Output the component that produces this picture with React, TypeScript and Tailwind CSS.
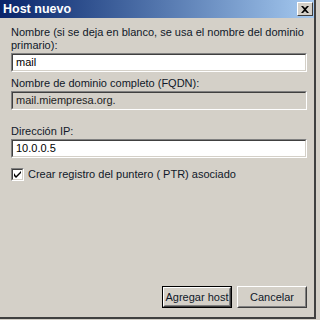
import React from 'react'

const font = { fontFamily: '"Liberation Sans", "DejaVu Sans", sans-serif' }

function Sunken({ value, readOnly }: { value: string; readOnly?: boolean }) {
  return (
    <div className="border border-t-[#808080] border-l-[#808080] border-r-white border-b-white">
      <div
        className={`h-[17px] border border-t-[#404040] border-l-[#404040] border-r-[#d4d0c8] border-b-[#d4d0c8] flex items-center pl-[3px] text-[11px] leading-none ${
          readOnly ? 'bg-[#d4d0c8] text-[#222]' : 'bg-white text-black'
        }`}
      >
        {value}
      </div>
    </div>
  )
}

function Button({ label, isDefault }: { label: string; isDefault?: boolean }) {
  const inner = (
    <div className="h-full border border-t-white border-l-white border-r-[#404040] border-b-[#404040]">
      <div className="h-full border border-t-[#d4d0c8] border-l-[#d4d0c8] border-r-[#808080] border-b-[#808080] flex items-center justify-center text-[11px] text-[#101828]">
        {label}
      </div>
    </div>
  )
  return (
    <div className={`w-[70px] h-[22px] ${isDefault ? 'border border-black' : ''}`}>
      {inner}
    </div>
  )
}

export default function App() {
  return (
    <div className="w-[320px] h-[320px] bg-[#d4d0c8] overflow-hidden" style={font}>
      <div className="w-[316px] h-[319px] flex flex-col bg-[#d4d0c8] border-r-2 border-b-2 border-r-[#404040] border-b-[#404040]">
        <div className="h-[18px] flex items-center justify-between pl-[3px] pr-[1px] bg-gradient-to-r from-[#0a246a] to-[#a6caf0]">
          <span className="text-white font-bold text-[12.5px]">Host nuevo</span>
          <div className="w-[16px] h-[14px] bg-[#d4d0c8] border border-t-white border-l-white border-r-[#404040] border-b-[#404040] flex items-center justify-center">
            <svg width="8" height="7" viewBox="0 0 8 7">
              <path d="M0 0 L2 0 L4 2 L6 0 L8 0 L5 3.5 L8 7 L6 7 L4 5 L2 7 L0 7 L3 3.5 Z" fill="#000" />
            </svg>
          </div>
        </div>

        <div className="flex-1 flex flex-col pl-[11px] pr-[7px] pt-[8px] pb-[9px] text-[11px] leading-[13px] text-[#101828]">
          <p>Nombre (si se deja en blanco, se usa el nombre del dominio primario):</p>
          <div className="mt-[1px]">
            <Sunken value="mail" />
          </div>
          <p className="mt-[5px]">Nombre de dominio completo (FQDN):</p>
          <div className="mt-[1px]">
            <Sunken value="mail.miempresa.org." readOnly />
          </div>
          <p className="mt-[15px]">Dirección IP:</p>
          <div className="mt-[1px]">
            <Sunken value="10.0.0.5" />
          </div>
          <div className="mt-[10px] flex items-center gap-[4px]">
            <div className="w-[13px] h-[13px] border border-t-[#808080] border-l-[#808080] border-r-white border-b-white">
              <div className="w-full h-full bg-white border border-t-[#404040] border-l-[#404040] border-r-[#d4d0c8] border-b-[#d4d0c8] flex items-center justify-center">
                <svg width="7" height="7" viewBox="0 0 7 7">
                  <path d="M0 2 L0 5 L2 7 L7 2 L7 0 L2 5 Z" fill="#000" />
                </svg>
              </div>
            </div>
            <span>Crear registro del puntero ( PTR) asociado</span>
          </div>
          <div className="mt-auto flex justify-end gap-[5px]">
            <Button label="Agregar host" isDefault />
            <Button label="Cancelar" />
          </div>
        </div>
      </div>
    </div>
  )
}
